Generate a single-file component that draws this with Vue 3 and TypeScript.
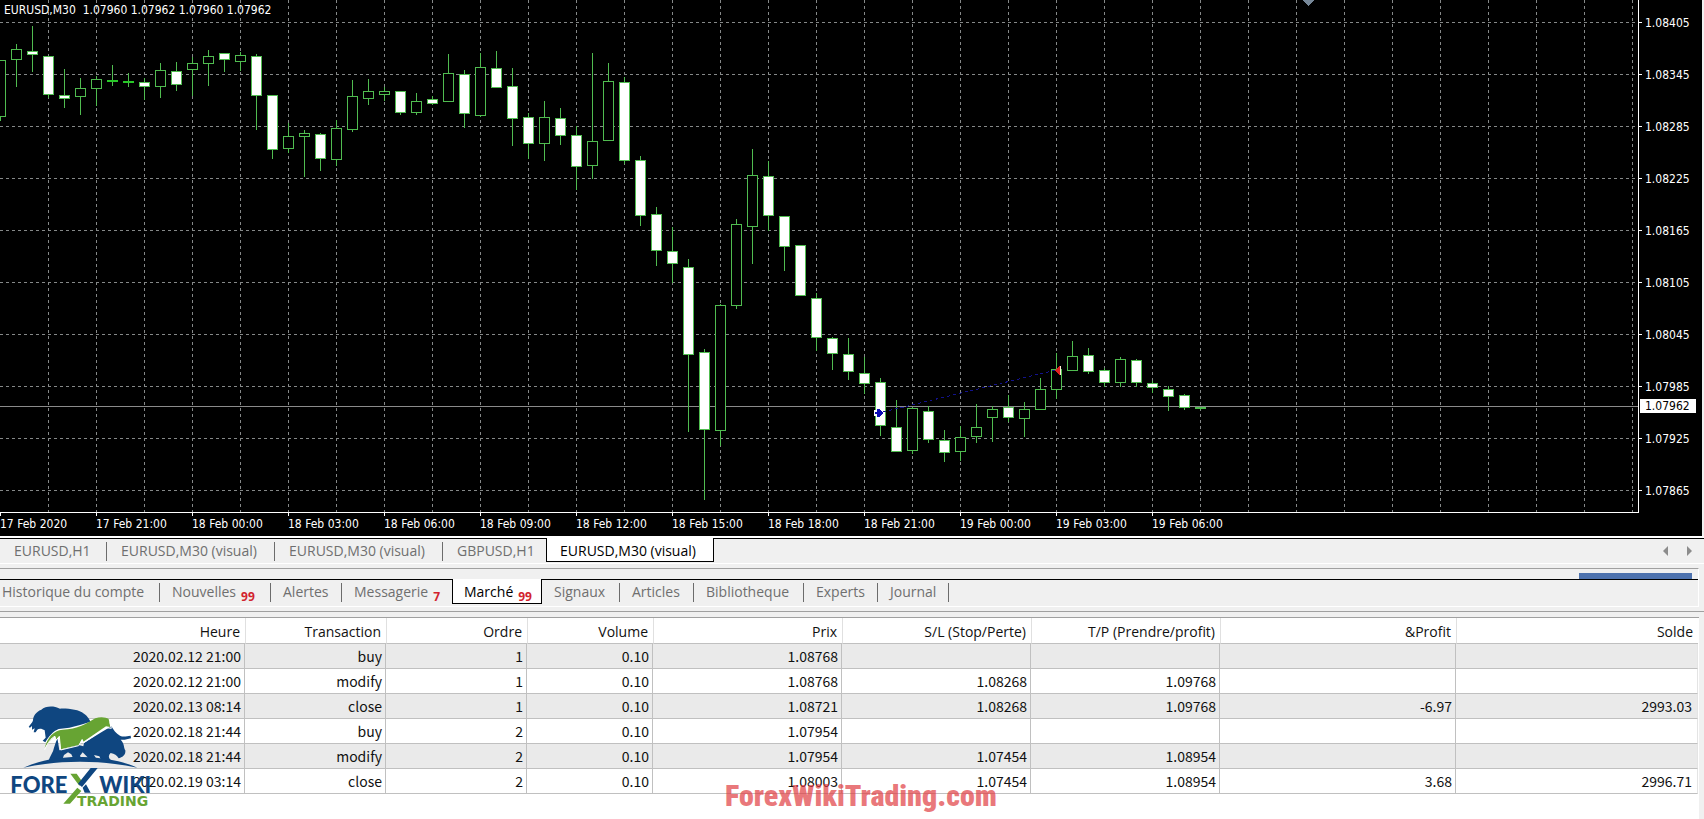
<script setup lang="ts">
import { ref } from 'vue'

type Kind = 'up' | 'down' | 'doji'
type Candle = [high: number, top: number, bottom: number, low: number, kind: Kind]

const STEP = 16
const GRID_X = 48
const GRID_Y = 52

const candles: Candle[] = [
  [60, 60, 116, 120, 'up'], [44, 49, 59, 86, 'up'], [26, 51, 54, 71, 'down'],
  [56, 56, 94, 97, 'down'], [69, 95, 98, 107, 'down'], [78, 88, 96, 114, 'up'],
  [76, 79, 88, 105, 'up'], [65, 80, 81, 85, 'doji'], [73, 81, 82, 86, 'doji'],
  [78, 82, 86, 99, 'down'], [63, 70, 86, 97, 'up'], [62, 71, 84, 90, 'down'],
  [57, 63, 69, 95, 'up'], [50, 56, 63, 85, 'up'], [53, 53, 59, 71, 'down'],
  [52, 55, 61, 70, 'up'], [54, 56, 95, 129, 'down'], [95, 95, 149, 158, 'down'],
  [123, 136, 148, 152, 'up'], [130, 133, 136, 176, 'up'], [133, 134, 158, 170, 'down'],
  [120, 128, 159, 165, 'up'], [80, 96, 129, 131, 'up'], [79, 91, 98, 104, 'up'],
  [87, 91, 94, 100, 'up'], [91, 91, 112, 114, 'down'], [93, 101, 112, 114, 'up'],
  [96, 99, 103, 104, 'down'], [54, 73, 101, 101, 'up'], [70, 74, 113, 127, 'down'],
  [53, 67, 115, 116, 'up'], [51, 68, 87, 87, 'down'], [68, 86, 118, 145, 'down'],
  [113, 117, 143, 158, 'down'], [101, 117, 143, 160, 'up'], [108, 118, 135, 144, 'down'],
  [126, 135, 166, 189, 'down'], [53, 141, 165, 178, 'up'], [63, 81, 140, 140, 'up'],
  [77, 82, 160, 163, 'down'], [156, 160, 215, 225, 'down'], [207, 214, 250, 265, 'down'],
  [227, 251, 263, 282, 'down'], [259, 267, 354, 431, 'down'], [349, 352, 429, 499, 'down'],
  [304, 305, 430, 445, 'up'], [219, 224, 305, 308, 'up'], [149, 175, 226, 263, 'up'],
  [161, 176, 215, 230, 'down'], [216, 216, 246, 270, 'down'], [245, 245, 295, 295, 'down'],
  [293, 298, 337, 350, 'down'], [337, 338, 353, 369, 'down'], [338, 354, 371, 379, 'down'],
  [357, 373, 383, 393, 'down'], [378, 382, 425, 435, 'down'], [400, 427, 451, 451, 'down'],
  [407, 408, 450, 453, 'up'], [406, 411, 439, 442, 'down'], [430, 440, 452, 461, 'down'],
  [426, 437, 451, 460, 'up'], [404, 427, 436, 442, 'up'], [406, 409, 417, 441, 'up'],
  [395, 407, 417, 421, 'down'], [402, 409, 418, 436, 'up'], [378, 389, 409, 409, 'up'],
  [353, 369, 389, 398, 'up'], [341, 356, 370, 370, 'up'], [348, 355, 371, 373, 'down'],
  [368, 370, 382, 386, 'down'], [357, 359, 382, 386, 'up'], [359, 360, 382, 386, 'down'],
  [381, 383, 387, 392, 'down'], [386, 389, 396, 410, 'down'], [394, 395, 407, 409, 'down'],
  [407, 407, 408, 409, 'up'],
]

const prices = ['1.08405', '1.08345', '1.08285', '1.08225', '1.08165', '1.08105', '1.08045', '1.07985', '1.07925', '1.07865']
const times = ['17 Feb 2020', '17 Feb 21:00', '18 Feb 00:00', '18 Feb 03:00', '18 Feb 06:00', '18 Feb 09:00', '18 Feb 12:00', '18 Feb 15:00', '18 Feb 18:00', '18 Feb 21:00', '19 Feb 00:00', '19 Feb 03:00', '19 Feb 06:00']

interface Tab { label: string; width: number; badge?: string }

const chartTabs: Tab[] = [
  { label: 'EURUSD,H1', width: 107 },
  { label: 'EURUSD,M30 (visual)', width: 168 },
  { label: 'EURUSD,M30 (visual)', width: 168 },
  { label: 'GBPUSD,H1', width: 103 },
  { label: 'EURUSD,M30 (visual)', width: 168 },
]
const panelTabs: Tab[] = [
  { label: 'Historique du compte', width: 160 },
  { label: 'Nouvelles', width: 111, badge: '99' },
  { label: 'Alertes', width: 71 },
  { label: 'Messagerie', width: 110, badge: '7' },
  { label: 'Marché', width: 90, badge: '99' },
  { label: 'Signaux', width: 78 },
  { label: 'Articles', width: 74 },
  { label: 'Bibliotheque', width: 110 },
  { label: 'Experts', width: 74 },
  { label: 'Journal', width: 71 },
]
const activeChart = ref(4)
const activePanel = ref(4)

const columns = ['Heure', 'Transaction', 'Ordre', 'Volume', 'Prix', 'S/L (Stop/Perte)', 'T/P (Prendre/profit)', '&Profit', 'Solde']
const rows = [
  ['2020.02.12 21:00', 'buy', '1', '0.10', '1.08768', '', '', '', ''],
  ['2020.02.12 21:00', 'modify', '1', '0.10', '1.08768', '1.08268', '1.09768', '', ''],
  ['2020.02.13 08:14', 'close', '1', '0.10', '1.08721', '1.08268', '1.09768', '-6.97', '2993.03'],
  ['2020.02.18 21:44', 'buy', '2', '0.10', '1.07954', '', '', '', ''],
  ['2020.02.18 21:44', 'modify', '2', '0.10', '1.07954', '1.07454', '1.08954', '', ''],
  ['2020.02.19 03:14', 'close', '2', '0.10', '1.08003', '1.07454', '1.08954', '3.68', '2996.71'],
]
</script>

<template>
  <main class="terminal">
    <section class="chart">
      <div class="plot">
        <svg class="canvas" role="img" aria-label="EURUSD M30">
          <g class="grid">
            <line v-for="n in 34" :key="'v' + n" :x1="n * GRID_X" :x2="n * GRID_X" y1="0" y2="100%" />
            <line v-for="(p, i) in prices" :key="p" x1="0" x2="100%" :y1="22 + i * GRID_Y" :y2="22 + i * GRID_Y" />
          </g>
          <line class="bid" x1="0" x2="100%" y1="406" y2="406" />
          <g v-for="(c, i) in candles" :key="i" :class="['candle', c[4]]">
            <line :x1="i * STEP" :x2="i * STEP" :y1="c[0]" :y2="c[3] + 1" />
            <rect :x="i * STEP - 5" :y="c[1]" width="10" :height="c[2] - c[1]" />
          </g>
          <line class="trade" x1="883" y1="412" x2="1056" y2="370" />
          <path class="entry-edge" d="M874 410h3v-2h3v10h-3v-2h-3z" />
          <path class="entry" d="M875 412h2v-3h2l4 4-4 4h-2v-3h-2z" />
          <path class="exit" d="M1055 370l5-5v11z" />
          <path class="exit-edge" d="M1060 366v9" />
          <path class="shift" d="M1302 0h12l-6 6z" />
        </svg>
        <p class="quote">EURUSD,M30&nbsp; 1.07960 1.07962 1.07960 1.07962</p>
      </div>
      <div class="prices">
        <span v-for="p in prices" :key="p">{{ p }}</span>
        <strong class="now">1.07962</strong>
      </div>
      <div class="times">
        <span v-for="t in times" :key="t">{{ t }}</span>
      </div>
    </section>

    <nav class="tabs chart-tabs">
      <button
        v-for="(t, i) in chartTabs" :key="i" type="button"
        :class="{ active: i === activeChart }" :style="{ width: t.width + 'px' }"
        @click="activeChart = i"
      >{{ t.label }}</button>
      <div class="scroll">
        <button type="button" aria-label="Précédent"><svg width="5" height="10"><path d="M5 0v10L0 5z" /></svg></button>
        <button type="button" aria-label="Suivant"><svg width="5" height="10"><path d="M0 0v10l5-5z" /></svg></button>
      </div>
    </nav>

    <section class="dock">
      <div class="strip"><i class="thumb"></i></div>
      <nav class="tabs panel-tabs">
        <button
          v-for="(t, i) in panelTabs" :key="t.label" type="button"
          :class="{ active: i === activePanel }" :style="{ width: t.width + 'px' }"
          @click="activePanel = i"
        >{{ t.label }}<sub v-if="t.badge">{{ t.badge }}</sub></button>
      </nav>
    </section>

    <section class="market">
      <table>
        <colgroup><col v-for="(c, i) in columns" :key="c" :class="'c' + i"></colgroup>
        <thead>
          <tr><th v-for="c in columns" :key="c" scope="col">{{ c }}</th></tr>
        </thead>
        <tbody>
          <tr v-for="(r, i) in rows" :key="i"><td v-for="(v, j) in r" :key="j">{{ v }}</td></tr>
        </tbody>
      </table>

      <svg class="logo" viewBox="0 0 495 360" role="img" aria-label="Forex Wiki Trading">
        <g class="navy">
          <path d="M86 96C90 88 98 84 99 76C99 64 108 50 124 44C136 34 158 31 180 41C206 40 236 44 252 56C264 64 268 74 272 80L240 90L208 98L176 102C160 108 146 124 136 142L128 137L137 128L134 106C126 100 116 100 112 104L107 112L101 112L104 100L96 104L96 93L90 98Z" />
          <path d="M146 196C150 182 160 172 162 158L172 128L178 166L236 150L250 154L252 144L304 112L334 94C340 104 348 116 360 122C374 128 380 122 392 122L393 130L374 134L362 134C374 146 370 156 376 166C378 180 366 188 356 190C350 180 344 176 332 174C326 180 324 188 332 194L326 200H306L298 184L282 180L292 196L294 200H272L262 186L248 172L240 182L246 196H222L214 178L204 172L192 180L186 196Z" />
          <path d="M70 218C130 192 190 184 250 186C320 188 370 200 412 218C350 206 300 200 240 200C180 200 130 206 70 218Z" />
        </g>
        <path class="lime" d="M134 160C142 128 160 106 188 104C232 104 262 84 286 70C300 64 318 66 326 72L331 96L318 94L250 140L246 132L236 150L182 163L178 124L168 134L164 124C150 134 142 148 134 160Z" />
        <path class="spark" d="M134 164C144 142 154 128 165 124L168 136L178 124L182 165L236 152L247 134L250 144L318 98L334 100L330 82" />
        <text class="word navy" x="31" y="293">FORE</text>
        <text class="word navy" x="298" y="293">WIKI</text>
        <path class="lime" d="M211 236H230L248 262L238 272ZM190 326L232 278L244 288L210 326Z" />
        <path class="navy" d="M272 219H293L246 276L234 266ZM248 278L258 268L272 293H254Z" />
        <text class="sub lime" x="231" y="332">TRADING</text>
      </svg>
      <p class="site">ForexWikiTrading.com</p>
    </section>
  </main>
</template>

<style>
body { margin: 0; background: #f0f0f0; }
</style>

<style scoped>
.terminal {
  display: flex;
  flex-direction: column;
  min-height: 100vh;
  overflow: hidden;
  background: #f0f0f0;
  font: 14px/20px "Open Sans", "Noto Sans", sans-serif;
  color: #111;
}

/* chart */
.chart {
  display: grid;
  grid-template-columns: minmax(0, 1fr) 63px;
  grid-template-rows: 513px 23px;
  margin-right: 2px;
  background: #000;
  color: #fff;
  font: 12px/15px "DejaVu Sans Condensed", "DejaVu Sans", sans-serif;
}
.plot {
  position: relative;
  border-right: 1px solid #fff;
  border-bottom: 1px solid #fff;
}
.canvas { display: block; width: 100%; height: 512px; shape-rendering: crispEdges; }
.grid line { stroke: #858888; stroke-dasharray: 3 3; }
.bid { stroke: #8a8a8a; }
.candle line, .candle rect { stroke: #50bc50; }
.candle.up rect { fill: #000; }
.candle.down rect { fill: #fff; }
.candle.doji rect { stroke: #28c828; }
.trade { stroke: #12128c; stroke-dasharray: 3 3; }
.entry { fill: #0a0ab4; }
.entry-edge { fill: #fff; }
.exit { fill: #e02020; }
.exit-edge { fill: none; stroke: #fff0d8; }
.shift { fill: #778899; }
.quote { position: absolute; top: 3px; left: 4px; margin: 0; white-space: nowrap; }
.prices { position: relative; display: flex; flex-direction: column; padding-top: 16px; }
.prices span { flex: none; height: 52px; padding-left: 6px; }
.prices span::before {
  content: "";
  float: left;
  width: 3px;
  height: 1px;
  margin: 6px 0 0 -6px;
  background: #fff;
}
.now {
  position: absolute;
  top: 399px;
  left: 1px;
  width: 51px;
  padding-left: 5px;
  line-height: 14px;
  background: #fff;
  color: #000;
  font-weight: 400;
}
.times { display: flex; grid-column: 1 / -1; }
.times span { flex: none; width: 96px; padding-top: 4px; box-sizing: border-box; white-space: nowrap; }
.times span::before {
  content: "";
  display: block;
  width: 1px;
  height: 3px;
  margin-top: -4px;
  margin-bottom: 1px;
  background: #fff;
}

/* tab rows */
.tabs { display: flex; border-top: 1px solid #000; color: #6f6f6f; }
.tabs button {
  flex: none;
  box-sizing: border-box;
  margin: 0;
  padding: 0 0 0 14px;
  border: 0;
  background: none;
  color: inherit;
  font: inherit;
  text-align: left;
  white-space: nowrap;
}
.tabs > button {
  position: relative;
  height: 24px;
}
.tabs > button::after {
  content: "";
  position: absolute;
  top: 3px;
  right: 0;
  bottom: 2px;
  width: 1px;
  background: #6c6c6c;
}
.tabs > button.active {
  margin-top: -1px;
  padding-top: 2px;
  padding-left: 13px;
  border: 1px solid #000;
  border-top: 0;
  background: #fff;
  color: #000;
}
.tabs > button.active::after, .tabs > button:has(+ .active)::after { display: none; }
.chart-tabs {
  height: 24px;
  margin-top: 2px;
  border-bottom: 1px solid #fff;
  box-shadow: 0 -2px #fff;
}
.scroll { display: flex; align-items: center; gap: 19px; margin-left: auto; padding-right: 12px; }
.tabs .scroll button { display: flex; padding: 0; }
.scroll path { fill: #8c8c8c; }

.dock {
  margin: 4px 5px 0 0;
  border-top: 1px solid #a0a0a0;
  border-right: 1px solid #fff;
  border-bottom: 1px solid #fff;
}
.strip { display: flex; justify-content: flex-end; align-items: flex-end; height: 10px; padding-right: 6px; }
.thumb { width: 113px; height: 6px; background: #4d72ae; }
.panel-tabs { height: 26px; }
.panel-tabs > button { padding-left: 12px; }
.panel-tabs > button:first-child { padding-left: 2px; }
.panel-tabs > button.active { height: 25px; padding-left: 11px; }
.panel-tabs sub {
  margin-left: 5px;
  color: #d2232d;
  font-size: 12px;
  font-weight: 700;
  line-height: 12px;
  vertical-align: -4px;
}

/* market table */
.market {
  position: relative;
  flex: 1;
  margin-top: 4px;
  padding: 5px 6px 0 0;
  border-top: 1px solid #a0a0a0;
}
.market::before {
  content: "";
  position: absolute;
  inset: 5px 5px 0 0;
  border-top: 1px solid #a0a0a0;
  background: #fff;
}
table { position: relative; width: 100%; table-layout: fixed; border-collapse: separate; border-spacing: 0; margin-top: 1px; }
.c0 { width: 245px; }
.c1, .c2 { width: 141px; }
.c3 { width: 126px; }
.c4, .c5, .c6 { width: 189px; }
.c7 { width: 236px; }
th, td { box-sizing: border-box; padding: 0; text-align: right; white-space: nowrap; border-bottom: 1px solid #c0c0c0; }
th { height: 26px; padding: 2px 5px 0 0; border-left: 1px solid #e0e0e0; font-weight: 400; }
th:first-child { border-left: 0; }
td { height: 25px; padding-right: 3px; border-right: 1px solid #c0c0c0; font-family: "Noto Sans CJK SC", "Open Sans", sans-serif; }
tbody tr:nth-child(odd) { background: #eaeaea; }
th:last-child, td:last-child { padding-right: 5px; }
td:last-child { border-right-color: #e4e4e4; }

.logo { position: absolute; left: 0; top: 83px; width: 165px; height: 120px; }
.navy { fill: #0f4680; }
.lime { fill: #67a433; }
.spark { fill: none; stroke: #fff; stroke-width: 3; }
.word { font: 900 66px Lato, sans-serif; }
.sub { font: 700 42px "DejaVu Sans", sans-serif; }
.site {
  position: absolute;
  top: 166px;
  left: 0;
  right: 0;
  margin: 0;
  padding-left: 18px;
  text-align: center;
  color: rgba(224, 60, 64, 0.7);
  font: 900 30px/36px "Roboto Condensed", Roboto, sans-serif;
}
</style>
